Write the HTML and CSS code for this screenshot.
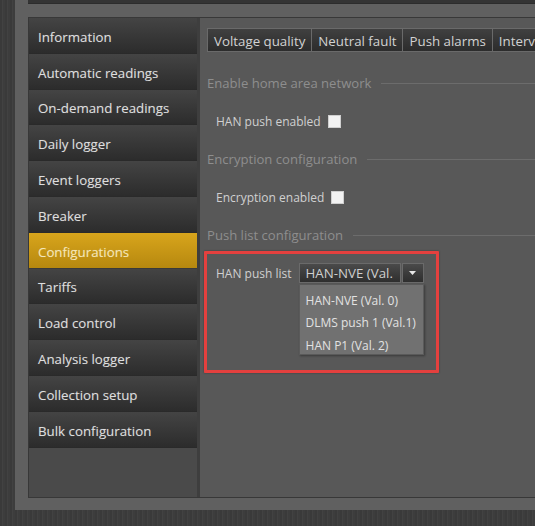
FILE: index.html
```html
<!DOCTYPE html>
<html>
<head>
<meta charset="utf-8">
<link rel="stylesheet" href="styles.css">
</head>
<body>
<div class="screen">
  <div class="frame">
    <div class="topbar"></div>
    <div class="panel">
      <nav class="sidebar">
        <div class="nav-item">Information</div>
        <div class="nav-item">Automatic readings</div>
        <div class="nav-item">On-demand readings</div>
        <div class="nav-item">Daily logger</div>
        <div class="nav-item">Event loggers</div>
        <div class="nav-item">Breaker</div>
        <div class="nav-item active">Configurations</div>
        <div class="nav-item">Tariffs</div>
        <div class="nav-item">Load control</div>
        <div class="nav-item">Analysis logger</div>
        <div class="nav-item">Collection setup</div>
        <div class="nav-item">Bulk configuration</div>
      </nav>
      <main class="content">
        <div class="tabs">
          <div class="tab">Voltage quality</div>
          <div class="tab">Neutral fault</div>
          <div class="tab">Push alarms</div>
          <div class="tab">Interval</div>
        </div>
        <div class="group-header"><span>Enable home area network</span><i class="rule"></i></div>
        <div class="field"><span>HAN push enabled</span><span class="checkbox"></span></div>
        <div class="group-header"><span>Encryption configuration</span><i class="rule"></i></div>
        <div class="field"><span>Encryption enabled</span><span class="checkbox"></span></div>
        <div class="group-header"><span>Push list configuration</span><i class="rule"></i></div>
        <div class="field combo-row">
          <span>HAN push list</span>
          <div class="combo">
            <div class="combo-value">HAN-NVE (Val.</div>
            <div class="combo-btn"><svg width="7" height="4" viewBox="0 0 7 4"><path d="M0 0H7L3.5 4Z" fill="#e8e8e8"/></svg></div>
            <div class="dropdown">
              <div class="opt">HAN-NVE (Val. 0)</div>
              <div class="opt">DLMS push 1 (Val.1)</div>
              <div class="opt">HAN P1 (Val. 2)</div>
            </div>
          </div>
        </div>
        <div class="highlight"></div>
      </main>
    </div>
  </div>
</div>
</body>
</html>
```
FILE: styles.css
```css
* { box-sizing: border-box; }
html, body {
  margin: 0;
  width: 535px;
  height: 526px;
  overflow: hidden;
}
body {
  background: repeating-linear-gradient(90deg, #3a3a3a 0 2px, #424242 2px 3px, #3d3d3d 3px 5px);
  font-family: "Open Sans", "Noto Sans", sans-serif;
  font-size: 12.5px;
}
.screen {
  padding-left: 15px;
  height: 510px;
}
.frame {
  width: 600px;
  height: 510px;
  background: #606060;
  padding-left: 13px;
  display: flex;
  flex-direction: column;
}
.topbar {
  height: 4px;
  background: #343434;
  border-bottom: 1px solid #2c2c2c;
}
.panel {
  margin-top: 13px;
  height: 481px;
  border: 1px solid #383838;
  display: flex;
  background: #585858;
}
.sidebar {
  width: 171px;
  flex: none;
  background: #4a4a4a;
  border-right: 3px solid #3e3e3e;
}
.nav-item {
  height: 35.8px;
  border-bottom: 1px solid #2a2a2a;
  background: linear-gradient(#444444, #2c2c2c);
  color: #dedede;
  padding: 3px 0 0 9px;
  display: flex;
  align-items: center;
  font-size: 13.3px;
  text-shadow: 0 0 1px rgba(255,255,255,0.25);
  white-space: nowrap;
}
.nav-item.active {
  background: linear-gradient(#d8a51c, #b6880f);
  color: #f4e6b8;
  border-bottom-color: #3a3a3a;
}
.content {
  flex: 1;
  position: relative;
  padding: 10px 0 0 7px;
  overflow: hidden;
  background: #585858;
}
.tabs {
  display: flex;
  height: 24px;
  margin-bottom: 22px;
}
.tab {
  background: linear-gradient(#404040, #2c2c2c);
  border: 1px solid #6a6a6a;
  border-left-width: 0;
  color: #d2d2d2;
  padding: 1px 6px 0;
  display: flex;
  align-items: center;
  white-space: nowrap;
  font-size: 13.3px;
}
.tab:first-child { border-left-width: 1px; }
.group-header {
  height: 18px;
  margin-bottom: 20px;
  display: flex;
  align-items: center;
  color: #8e8e8e;
  font-size: 13.1px;
  white-space: nowrap;
}
.rule {
  flex: 1;
  height: 1px;
  background: #6c6c6c;
  margin-left: 10px;
}
.field {
  height: 18px;
  margin-bottom: 20px;
  padding-left: 9px;
  display: flex;
  align-items: center;
  color: #d0d0d0;
  font-size: 12px;
  white-space: nowrap;
}
.checkbox {
  width: 13px;
  height: 13px;
  background: #f2f2f2;
  margin-left: 7px;
  border: 1px solid #cfcfcf;
}
.combo-row { gap: 7px; }
.combo {
  position: relative;
  display: flex;
  height: 20px;
}
.combo-value {
  width: 102px;
  background: linear-gradient(#4a4a4a, #2e2e2e);
  border: 1px solid #6a6a6a;
  color: #cfcfcf;
  font-size: 13.3px;
  padding-left: 6px;
  white-space: nowrap;
  display: flex;
  align-items: center;
}
.combo-btn {
  width: 22px;
  margin-left: 1px;
  background: linear-gradient(#4a4a4a, #2e2e2e);
  border: 1px solid #6a6a6a;
  display: flex;
  align-items: center;
  justify-content: center;
}
.dropdown {
  position: absolute;
  left: 0;
  top: 21px;
  width: 125px;
  height: 71px;
  background: #717171;
  border: 1px solid #5a5a5a;
  box-shadow: 1px 1px 2px rgba(0,0,0,0.35);
  padding-top: 4px;
}
.opt {
  height: 22.5px;
  padding-left: 6px;
  color: #e2e2e2;
  display: flex;
  align-items: center;
  white-space: nowrap;
}
.highlight {
  position: absolute;
  left: 4px;
  top: 233px;
  width: 235px;
  height: 122px;
  border: 3px solid #e4403e;
  border-radius: 1px;
  box-shadow: 0 0 2px rgba(0,0,0,0.4);
  pointer-events: none;
}
```
